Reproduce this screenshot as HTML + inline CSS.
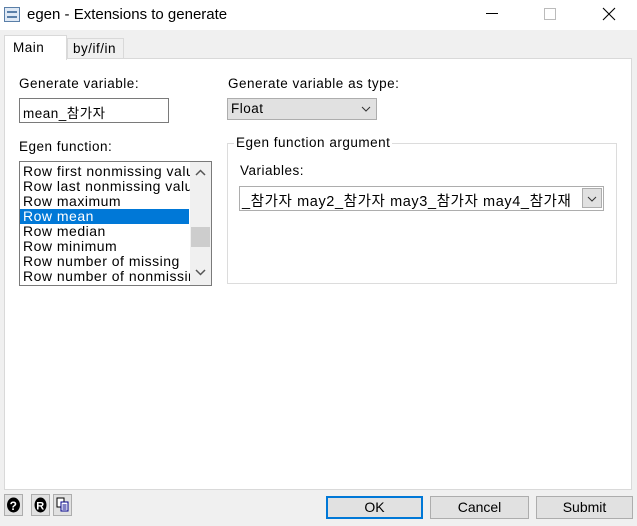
<!DOCTYPE html>
<html><head><meta charset="utf-8"><style>
*{box-sizing:border-box;margin:0;padding:0}
body{width:637px;height:526px;background:#f0f0f0;font-family:"Liberation Sans","Noto Sans CJK KR",sans-serif;font-size:13.5px;letter-spacing:0.5px;color:#000;position:relative;overflow:hidden}
.a{position:absolute}
.title{left:0;top:0;width:637px;height:30px;background:#fff}
.panel{left:4px;top:58px;width:628px;height:432px;background:#fff;border:1px solid #d9d9d9}
.tab1{left:4px;top:35px;width:63px;height:25px;background:#fff;border:1px solid #d9d9d9;border-bottom:none;padding:4px 0 0 8px}
.tab2{left:67px;top:38px;width:57px;height:20px;background:#f0f0f0;border:1px solid #d9d9d9;border-bottom:none;padding:2px 0 0 5px}
.inp{background:#fff;border:1px solid #7a7a7a}
.btn{background:#e1e1e1;border:1px solid #adadad;text-align:center;line-height:21px;font-size:14px;letter-spacing:0}
.lst div{height:15px;line-height:15px;padding-left:3px;white-space:nowrap;overflow:hidden;font-size:14px}
.ic{width:19px;height:22px;background:#e1e1e1;border:1px solid #adadad}
</style></head><body>
<div class="a title"></div>
<div class="a" style="left:4px;top:7px;width:16px;height:15px;border:1px solid #5a7fa8;background:#dfe9f5"><div style="margin:3px 2px;height:2px;background:#5a7fa8"></div><div style="margin:2px 2px;height:2px;background:#5a7fa8"></div></div>
<div class="a" style="left:27px;top:6px;font-size:15px;letter-spacing:0">egen - Extensions to generate</div>
<div class="a" style="left:486px;top:13px;width:12px;height:1px;background:#000"></div>
<div class="a" style="left:544px;top:8px;width:12px;height:12px;border:1px solid #bbb"></div>
<svg class="a" style="left:602px;top:7px" width="14" height="14"><path d="M1 1L13 13M13 1L1 13" stroke="#000" stroke-width="1.1"/></svg>
<div class="a panel"></div>
<div class="a tab2">by/if/in</div>
<div class="a tab1">Main</div>
<div class="a" style="left:19px;top:76px">Generate variable:</div>
<div class="a inp" style="left:19px;top:98px;width:150px;height:25px;padding:3px 0 0 3px">mean_참가자</div>
<div class="a" style="left:228px;top:76px">Generate variable as type:</div>
<div class="a" style="left:227px;top:98px;width:150px;height:22px;background:#e1e1e1;border:1px solid #adadad;padding:2px 0 0 3px">Float<svg class="a" style="left:133px;top:7px" width="10" height="6"><path d="M1 1L5 5L9 1" stroke="#333" fill="none"/></svg></div>
<div class="a" style="left:19px;top:139px">Egen function:</div>
<div class="a inp lst" style="left:19px;top:161px;width:193px;height:125px;padding-top:2px">
<div style="width:170px">Row first nonmissing value</div><div style="width:170px">Row last nonmissing value</div><div style="width:170px">Row maximum</div><div style="width:169px;background:#0078d7;color:#fff">Row mean</div><div style="width:170px">Row median</div><div style="width:170px">Row minimum</div><div style="width:170px">Row number of missing</div><div style="width:170px">Row number of nonmissing</div>
<div class="a" style="left:170px;top:0;width:21px;height:123px;background:#f0f0f0"><div class="a" style="left:1px;top:65px;width:19px;height:20px;background:#cdcdcd"></div>
<svg class="a" style="left:5px;top:7px" width="11" height="7"><path d="M1 6L5.5 1.5L10 6" stroke="#555" stroke-width="1.5" fill="none"/></svg>
<svg class="a" style="left:5px;top:107px" width="11" height="7"><path d="M1 1L5.5 5.5L10 1" stroke="#555" stroke-width="1.5" fill="none"/></svg></div>
</div>
<div class="a" style="left:227px;top:143px;width:390px;height:141px;border:1px solid #dcdcdc"></div>
<div class="a" style="left:234px;top:135px;background:#fff;padding:0 2px">Egen function argument</div>
<div class="a" style="left:240px;top:163px">Variables:</div>
<div class="a" style="left:239px;top:186px;width:365px;height:25px;border:1px solid #adadad;background:#fff;padding:3px 0 0 2px;white-space:nowrap;overflow:hidden;font-size:14.5px;letter-spacing:0.6px">_참가자 may2_참가자 may3_참가자 may4_참가재</div>
<div class="a" style="left:582px;top:188px;width:20px;height:20px;background:#e1e1e1;border:1px solid #adadad"><svg class="a" style="left:4px;top:7px" width="10" height="6"><path d="M1 1L5 5L9 1" stroke="#333" fill="none"/></svg></div>
<div class="a ic" style="left:4px;top:494px"><svg width="17" height="20"><ellipse cx="8.5" cy="10" rx="6.5" ry="7.5" fill="#000"/><text x="8.5" y="15" font-size="12" font-weight="bold" fill="#fff" text-anchor="middle" font-family="Liberation Sans">?</text></svg></div>
<div class="a ic" style="left:31px;top:494px"><svg width="17" height="20"><ellipse cx="8.5" cy="10" rx="6" ry="7.5" fill="#000"/><text x="8.5" y="14.5" font-size="11" font-weight="bold" fill="#fff" text-anchor="middle" font-family="Liberation Sans">R</text></svg></div>
<div class="a ic" style="left:53px;top:494px"><svg width="17" height="20"><rect x="3" y="3" width="7" height="9" fill="#fff" stroke="#000"/><rect x="7" y="7" width="7" height="9" fill="#fff" stroke="#00008b"/><path d="M8.5 10h4M8.5 12h4M8.5 14h4" stroke="#00008b"/></svg></div>
<div class="a btn" style="left:326px;top:496px;width:97px;height:23px;border:2px solid #0078d7;line-height:19px">OK</div>
<div class="a btn" style="left:430px;top:496px;width:99px;height:23px">Cancel</div>
<div class="a btn" style="left:536px;top:496px;width:97px;height:23px">Submit</div>
</body></html>
